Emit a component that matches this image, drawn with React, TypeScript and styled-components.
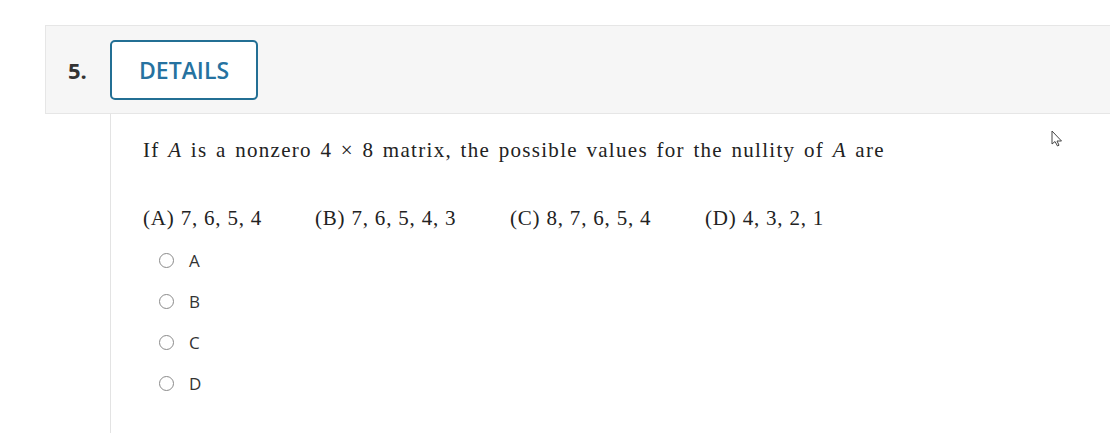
import React from 'react';
import styled, { createGlobalStyle } from 'styled-components';

const GlobalStyle = createGlobalStyle`
  html, body {
    margin: 0;
    padding: 0;
    background: #ffffff;
    overflow: hidden;
  }
  body {
    font-family: "Open Sans", "Liberation Sans", sans-serif;
  }
`;

const Page = styled.div`
  position: relative;
  width: 1110px;
  height: 433px;
  padding: 25px 0 0 45px;
  box-sizing: border-box;
  overflow: hidden;
`;

const Header = styled.div`
  display: flex;
  align-items: center;
  height: 89px;
  width: 1100px;
  box-sizing: border-box;
  padding-left: 22px;
  background: #f6f6f6;
  border: 1px solid #e6e6e6;
`;

const Number = styled.span`
  width: 42px;
  font-size: 22px;
  font-weight: 700;
  color: #333333;
`;

const DetailsButton = styled.button`
  width: 148px;
  height: 60px;
  box-sizing: border-box;
  border: 2px solid #236f94;
  border-radius: 5px;
  background: #ffffff;
  color: #2672a0;
  font-family: "Open Sans", sans-serif;
  font-size: 23px;
  font-weight: 600;
  padding: 0;
  cursor: pointer;
`;

const Body = styled.div`
  margin-left: 65px;
  height: 320px;
  border-left: 1px solid #e3e3e3;
  padding: 23px 0 0 32px;
  box-sizing: border-box;
`;

const Question = styled.p`
  margin: 0;
  font-family: "Liberation Serif", "Times New Roman", serif;
  font-size: 21px;
  letter-spacing: 1.3px;
  word-spacing: 2px;
  color: #222222;
  line-height: 26px;
`;

const Var = styled.i`
  font-style: italic;
`;

const Choices = styled.div`
  display: flex;
  margin-top: 42px;
  font-family: "Liberation Serif", "Times New Roman", serif;
  font-size: 21px;
  letter-spacing: 0.8px;
  color: #222222;
  line-height: 26px;
`;

const Choice = styled.span<{ $w: number }>`
  width: ${(p) => p.$w}px;
  flex: none;
`;

const RadioList = styled.ul`
  list-style: none;
  margin: 18px 0 0 16px;
  padding: 0;
  display: flex;
  flex-direction: column;
  gap: 19px;
`;

const RadioRow = styled.li`
  display: flex;
  align-items: center;
  height: 22px;
  font-size: 17px;
  color: #333333;
`;

const Circle = styled.span`
  width: 15px;
  height: 15px;
  box-sizing: border-box;
  border: 1.5px solid #8a8a8a;
  border-radius: 50%;
  margin-right: 15px;
`;

const Cursor = styled.svg`
  position: absolute;
  left: 1050px;
  top: 130px;
`;

const choices = [
  { label: '(A)', vals: '7, 6, 5, 4', w: 172 },
  { label: '(B)', vals: '7, 6, 5, 4, 3', w: 195 },
  { label: '(C)', vals: '8, 7, 6, 5, 4', w: 195 },
  { label: '(D)', vals: '4, 3, 2, 1', w: 200 },
];

const App: React.FC = () => {
  return (
    <Page>
      <GlobalStyle />
      <Header>
        <Number>5.</Number>
        <DetailsButton>DETAILS</DetailsButton>
      </Header>
      <Body>
        <Question>
          If <Var>A</Var> is a nonzero 4 × 8 matrix, the possible values for the nullity of <Var>A</Var> are
        </Question>
        <Choices>
          {choices.map((c) => (
            <Choice key={c.label} $w={c.w}>
              {c.label} {c.vals}
            </Choice>
          ))}
        </Choices>
        <RadioList>
          {['A', 'B', 'C', 'D'].map((l) => (
            <RadioRow key={l}>
              <Circle />
              {l}
            </RadioRow>
          ))}
        </RadioList>
      </Body>
      <Cursor width="14" height="20" viewBox="0 0 14 20">
        <path d="M2 1 L2 14 L5 11.5 L7.5 16 L9 15.2 L7 11 L11.5 11 Z" fill="#fff" stroke="#444" strokeWidth="1" strokeLinejoin="round" />
      </Cursor>
    </Page>
  );
};

export default App;
